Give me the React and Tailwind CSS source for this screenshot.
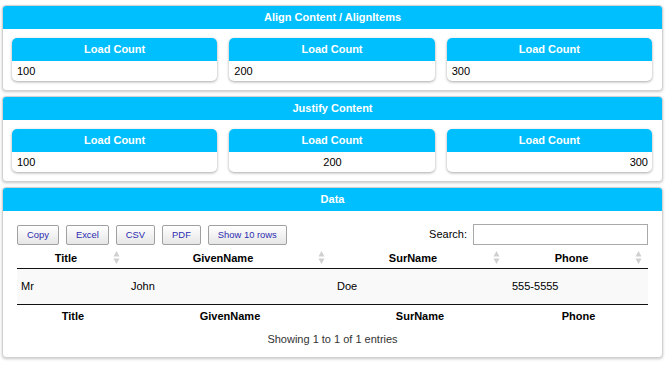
import React from "react";

function Panel({ title, children, className = "" }) {
  return (
    <div className={"w-[661px] bg-white border border-[#d2d2d2] rounded-[4px] shadow-[0_1px_3px_rgba(0,0,0,0.22)] overflow-hidden " + className}>
      <div className="h-[23px] bg-[#00bfff] text-white font-bold text-[11px] flex items-center justify-center">{title}</div>
      {children}
    </div>
  );
}

function Card({ value, align }) {
  return (
    <div className="rounded-[5px] bg-white shadow-[0_1px_3px_rgba(0,0,0,0.35)] overflow-hidden">
      <div className="h-[23px] bg-[#00bfff] text-white font-bold text-[11px] flex items-center justify-center">Load Count</div>
      <div className={"h-[20px] flex items-center px-[5px] pr-[4px] text-[11px] text-black " + align}>{value}</div>
    </div>
  );
}

function SortIcon() {
  return (
    <svg width="7" height="15" viewBox="0 0 7 15" className="absolute right-[6px] top-[2px]">
      <polygon points="0.5,6.5 3.5,1 6.5,6.5" fill="#cfcfcf" />
      <polygon points="0.5,8.5 6.5,8.5 3.5,14" fill="#cfcfcf" />
    </svg>
  );
}

function Btn({ children }) {
  return (
    <button className="h-[20px] px-[9px] text-[9.4px] text-[#2b2bb0] border border-[#a0a0a0] rounded-[2px] bg-gradient-to-b from-white to-[#e6e6e6] leading-none">
      {children}
    </button>
  );
}

export default function App() {
  const cols = ["Title", "GivenName", "SurName", "Phone"];
  const widths = ["w-[109px]", "w-[205px]", "w-[175px]", "w-[142px]"];
  return (
    <div className="w-[670px] h-[368px] bg-white pt-[5px] pl-[2px] flex flex-col gap-[5px] font-['Liberation_Sans',Arial,sans-serif] text-black">
      <Panel title="Align Content / AlignItems" className="h-[86px]">
        <div className="grid grid-cols-3 gap-[12px] pt-[9px] pl-[9px] pr-[10px]">
          <Card value="100" align="justify-start" />
          <Card value="200" align="justify-start" />
          <Card value="300" align="justify-start" />
        </div>
      </Panel>
      <Panel title="Justify Content" className="h-[86px]">
        <div className="grid grid-cols-3 gap-[12px] pt-[9px] pl-[9px] pr-[10px]">
          <Card value="100" align="justify-start" />
          <Card value="200" align="justify-center" />
          <Card value="300" align="justify-end" />
        </div>
      </Panel>
      <Panel title="Data" className="h-[171px]">
        <div className="pl-[14px] pr-[14px] pt-[13px]">
          <div className="flex items-center justify-between h-[21px]">
            <div className="flex gap-[7px]">
              <Btn>Copy</Btn>
              <Btn>Excel</Btn>
              <Btn>CSV</Btn>
              <Btn>PDF</Btn>
              <Btn>Show 10 rows</Btn>
            </div>
            <div className="flex items-center gap-[6px] text-[11px]">
              <span>Search:</span>
              <input className="w-[175px] h-[21px] border border-[#a9a9a9] bg-white outline-none" />
            </div>
          </div>
          <table className="w-[631px] table-fixed border-collapse mt-[3px] text-[11px]">
            <thead>
              <tr className="h-[20px] border-b border-[#111]">
                {cols.map((c, i) => (
                  <th key={c} className={"relative font-bold text-center pl-[4px] pr-[15px] " + widths[i]}>
                    {c}
                    <SortIcon />
                  </th>
                ))}
              </tr>
            </thead>
            <tbody>
              <tr className="h-[36px] bg-[#f9f9f9] border-b border-[#111]">
                <td className="pl-[4px] pt-[1px]">Mr</td>
                <td className="pl-[5px] pt-[1px]">John</td>
                <td className="pl-[6px] pt-[1px]">Doe</td>
                <td className="pl-[6px] pt-[1px]">555-5555</td>
              </tr>
            </tbody>
            <tfoot>
              <tr className="h-[22px]">
                {cols.map((c) => (
                  <th key={c} className="font-bold text-center pl-[3px] pt-[2px]">{c}</th>
                ))}
              </tr>
            </tfoot>
          </table>
          <div className="text-center text-[11px] text-[#333] mt-[5px]">Showing 1 to 1 of 1 entries</div>
        </div>
      </Panel>
    </div>
  );
}
